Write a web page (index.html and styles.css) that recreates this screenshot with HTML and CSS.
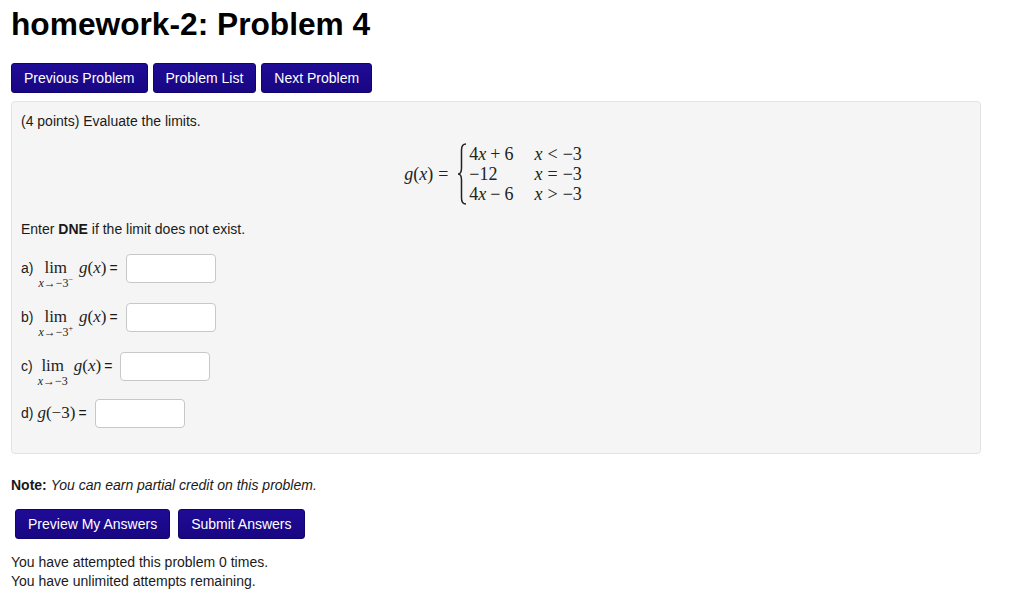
FILE: index.html
```html
<!DOCTYPE html>
<html>

<head>
  <title>homework-2: Problem 4</title>
  <link rel="stylesheet" href="styles.css">
</head>

<body>
  <h1>homework-2: Problem 4</h1>

  <div class="nav">
    <button class="btn">Previous Problem</button>
    <button class="btn">Problem List</button>
    <button class="btn">Next Problem</button>
  </div>

  <div class="problem">
    <p>(4 points) Evaluate the limits.</p>

    <div class="display">
      <span class="lhs"><i>g</i>(<i>x</i>)<span class="rel">=</span></span>
      <svg class="brace" width="10" height="62" viewBox="0 0 10 62">
        <path d="M9 1 C5.5 1 4.5 3 4.5 7 L4.5 25 C4.5 29 3.5 31 1 31 C3.5 31 4.5 33 4.5 37 L4.5 55 C4.5 59 5.5 61 9 61" fill="none" stroke="#222" stroke-width="1.5" />
      </svg>
      <div class="cases">
        <span>4<i>x</i><span class="bin">+</span>6</span><span><i>x</i><span class="rel">&lt;</span>−3</span>
        <span>−12</span><span><i>x</i><span class="rel">=</span>−3</span>
        <span>4<i>x</i><span class="bin">−</span>6</span><span><i>x</i><span class="rel">&gt;</span>−3</span>
      </div>
    </div>

    <p>Enter <b>DNE</b> if the limit does not exist.</p>

    <div class="part">
      <span>a)</span>
      <span class="lim"><span>lim</span><span class="sub"><i>x</i>→−3<sup>−</sup></span></span>
      <span class="math"><i>g</i>(<i>x</i>)</span>
      <span class="eq">=</span>
      <input type="text">
    </div>
    <div class="part">
      <span>b)</span>
      <span class="lim"><span>lim</span><span class="sub"><i>x</i>→−3<sup>+</sup></span></span>
      <span class="math"><i>g</i>(<i>x</i>)</span>
      <span class="eq">=</span>
      <input type="text">
    </div>
    <div class="part">
      <span>c)</span>
      <span class="lim"><span>lim</span><span class="sub"><i>x</i>→−3</span></span>
      <span class="math"><i>g</i>(<i>x</i>)</span>
      <span class="eq">=</span>
      <input type="text">
    </div>
    <div class="part last">
      <span>d)</span>
      <span class="math"><i>g</i>(−3)</span>
      <span class="eq">=</span>
      <input type="text">
    </div>
  </div>

  <p class="note"><b>Note:</b> <i>You can earn partial credit on this problem.</i></p>

  <div class="submit">
    <button class="btn">Preview My Answers</button>
    <button class="btn">Submit Answers</button>
  </div>

  <p class="attempts">You have attempted this problem 0 times.<br>You have unlimited attempts remaining.</p>
</body>

</html>
```

FILE: styles.css
```css
body {
  margin: 0 11px;
  font-family: "Liberation Sans", Arial, sans-serif;
  font-size: 14px;
  line-height: 20px;
  color: #1a1a1a;
  background: #fff;
}

h1 {
  margin: 6px 0 0;
  font-size: 31.7px;
  line-height: 36px;
  color: #000;
}

.nav {
  margin-top: 21px;
  display: flex;
  gap: 5px;
}

.btn {
  height: 30px;
  padding: 0 12px;
  border: 1px solid #10056a;
  border-radius: 3px;
  background: linear-gradient(#1f0c96, #180683);
  color: #fff;
  font-family: "Liberation Sans", Arial, sans-serif;
  font-size: 14px;
  cursor: pointer;
}

.problem {
  margin-top: 8px;
  padding: 9px 9px 14px;
  background-color: #f5f5f5;
  border: 1px solid #e3e3e3;
  border-radius: 4px;
  width: 950px;
}

.problem p {
  margin: 0;
}

.display {
  display: flex;
  justify-content: center;
  align-items: center;
  margin: 12px 0 14px;
  padding-right: 6px;
  font-family: "Liberation Serif", "Times New Roman", serif;
  font-size: 18px;
  color: #222;
}

.lhs {
  margin-right: 4px;
}

.rel {
  margin: 0 5px;
}

.bin {
  margin: 0 4px;
}

.brace {
  margin-right: 2px;
}

.cases {
  display: grid;
  grid-template-columns: auto auto;
  column-gap: 21px;
  line-height: 20px;
}

.part {
  display: flex;
  align-items: flex-start;
  margin-top: 13px;
  height: 36px;
}

.problem p + .part {
  margin-top: 19px;
}

.part.last {
  margin-top: 11px;
}

.part input {
  width: 90px;
  height: 29px;
  box-sizing: border-box;
  margin: -4px 0 0 8px;
  border: 1px solid #c8c8c8;
  border-radius: 4px;
  background: #fff;
}

.math,
.lim {
  font-family: "Liberation Serif", "Times New Roman", serif;
  font-size: 17px;
  color: #222;
}

.math {
  margin-left: 4px;
}

.eq {
  margin-left: 3px;
}

.lim {
  display: inline-flex;
  flex-direction: column;
  align-items: center;
  margin-left: 5px;
  margin-right: 2px;
}

.lim .sub {
  font-size: 12px;
  line-height: 10px;
}

.lim sup {
  font-size: 8px;
  line-height: 0;
}

.note {
  margin: 21px 0 0;
}

.submit {
  margin: 14px 0 0 4px;
  display: flex;
  gap: 8px;
}

.attempts {
  margin: 14px 0 0;
  line-height: 19px;
}
```
